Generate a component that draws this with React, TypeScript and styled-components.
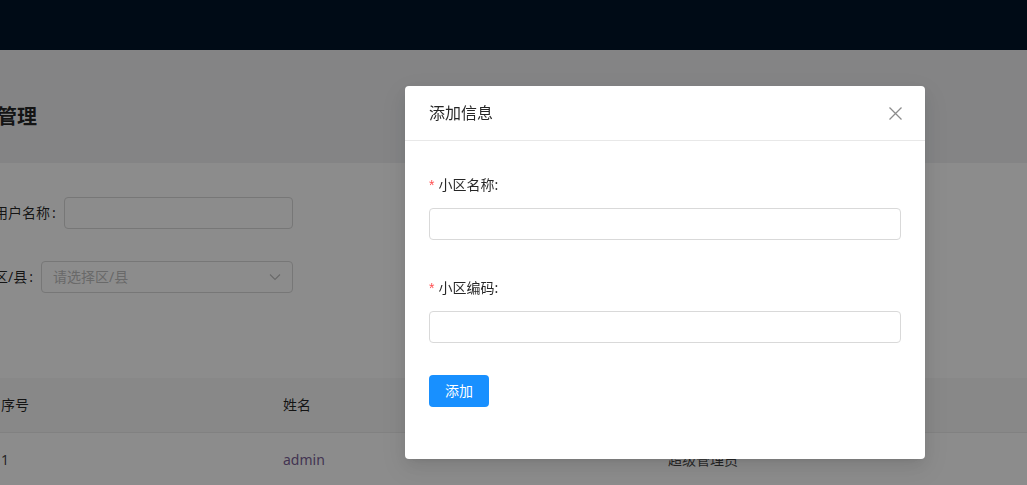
import React from "react";
import styled, { createGlobalStyle } from "styled-components";

const GlobalStyle = createGlobalStyle`
    html, body {
        margin: 0;
        padding: 0;
        width: 1027px;
        height: 485px;
        overflow: hidden;
        font-family: "Noto Sans", "Noto Sans CJK SC", sans-serif;
        font-size: 14px;
        color: rgba(0, 0, 0, 0.85);
    }
`

const Page = styled.div`
    width: 1027px;
    height: 485px;
    overflow: hidden;
    background: #ffffff;
`
const TopBar = styled.div`
    height: 50px;
    background: #001529;
`
const Main = styled.div`
    margin-left: -6px;
`
const PageHead = styled.div`
    height: 113px;
    box-sizing: border-box;
    background: #f0f1f3;
    display: flex;
    align-items: center;
    padding: 20px 0 0 3px;
`
const Title = styled.h2`
    margin: 0;
    font-size: 20px;
    font-weight: 700;
    line-height: 28px;
`
const Filters = styled.div`
    padding-top: 34px;
    display: flex;
    flex-direction: column;
    gap: 32px;
    width: 299px;
`
const FormRow = styled.div`
    display: flex;
    align-items: center;
    height: 32px;
`
const FieldLabel = styled.label`
    flex: none;
    line-height: 22px;
    white-space: nowrap;
`
const Colon = styled.span`
    margin: 0 8px 0 2px;
`
const TextBox = styled.div`
    flex: 1;
    height: 32px;
    box-sizing: border-box;
    border: 1px solid #d9d9d9;
    border-radius: 4px;
    background: #fff;
    display: flex;
    align-items: center;
    padding: 0 11px;
    color: #bfbfbf;
    line-height: 22px;
`
const Placeholder = styled.span`
    flex: 1;
`
const Table = styled.div`
    margin-top: 85px;
    margin-left: -9px;
`
const TableRow = styled.div<{ head?: boolean }>`
    display: grid;
    grid-template-columns: 282px 385px 1fr;
    height: 54px;
    align-items: center;
    background: ${p => (p.head ? "#f8f8f8" : "#fff")};
    border-bottom: 1px solid #ececec;
`
const Cell = styled.div<{ head?: boolean }>`
    padding: 0 16px;
    line-height: 22px;
    color: ${p => (p.head ? "rgba(0,0,0,0.85)" : "rgba(0,0,0,0.75)")};
    font-weight: 400;
`
const Link = styled.span`
    color: #7a5f96;
`

const Mask = styled.div`
    position: fixed;
    inset: 0;
    background: rgba(0, 0, 0, 0.45);
`
const Modal = styled.div`
    position: fixed;
    top: 86px;
    left: 405px;
    width: 520px;
    background: #fff;
    border-radius: 4px;
    box-shadow: 0 3px 6px -4px rgba(0,0,0,0.12), 0 6px 16px 0 rgba(0,0,0,0.08), 0 9px 28px 8px rgba(0,0,0,0.05);
`
const ModalHead = styled.div`
    height: 55px;
    box-sizing: border-box;
    border-bottom: 1px solid #e8e8e8;
    display: flex;
    align-items: center;
    justify-content: space-between;
    padding: 0 22px 0 24px;
`
const ModalTitle = styled.div`
    font-size: 16px;
    line-height: 22px;
    color: rgba(0, 0, 0, 0.85);
`
const CloseButton = styled.button`
    border: 0;
    background: none;
    padding: 0;
    width: 16px;
    height: 16px;
    display: flex;
    align-items: center;
    justify-content: center;
    color: rgba(0, 0, 0, 0.45);
    cursor: pointer;
`
const ModalBody = styled.div`
    padding: 33px 24px 52px;
    display: flex;
    flex-direction: column;
`
const Item = styled.div`
    display: flex;
    flex-direction: column;
    gap: 12px;
    margin-bottom: 37px;
`
const ItemLabel = styled.div`
    line-height: 22px;
    display: flex;
    align-items: center;
`
const Required = styled.span`
    color: #ff4d4f;
    font-family: SimSun, "Liberation Sans", sans-serif;
    margin-right: 4px;
    font-size: 14px;
`
const Input = styled.input`
    height: 32px;
    box-sizing: border-box;
    border: 1px solid #d9d9d9;
    border-radius: 4px;
    padding: 4px 11px;
    font: inherit;
    outline: none;
`
const Primary = styled.button`
    margin-top: -5px;
    align-self: flex-start;
    width: 60px;
    height: 32px;
    border: 0;
    border-radius: 4px;
    background: #1890ff;
    color: #fff;
    font: inherit;
    font-size: 14px;
    line-height: 22px;
    cursor: pointer;
`

const fields = ["小区名称", "小区编码"];

const App = () => {
    return (
        <>
            <GlobalStyle />
            <Page>
                <TopBar />
                <Main>
                    <PageHead>
                        <Title>管理</Title>
                    </PageHead>
                    <Filters>
                        <FormRow>
                            <FieldLabel>用户名称<Colon>:</Colon></FieldLabel>
                            <TextBox />
                        </FormRow>
                        <FormRow>
                            <FieldLabel>区/县<Colon>:</Colon></FieldLabel>
                            <TextBox>
                                <Placeholder>请选择区/县</Placeholder>
                                <svg width="12" height="12" viewBox="0 0 12 12" fill="none">
                                    <path d="M1 3.5 L6 8.5 L11 3.5" stroke="#bfbfbf" strokeWidth="1.1" />
                                </svg>
                            </TextBox>
                        </FormRow>
                    </Filters>
                    <Table>
                        <TableRow head>
                            <Cell head>序号</Cell>
                            <Cell head>姓名</Cell>
                            <Cell head>角色</Cell>
                        </TableRow>
                        <TableRow>
                            <Cell>1</Cell>
                            <Cell><Link>admin</Link></Cell>
                            <Cell>超级管理员</Cell>
                        </TableRow>
                    </Table>
                </Main>
                <Mask />
                <Modal>
                    <ModalHead>
                        <ModalTitle>添加信息</ModalTitle>
                        <CloseButton aria-label="close">
                            <svg width="13" height="13" viewBox="0 0 13 13">
                                <path d="M0.5 0.5 L12.5 12.5 M12.5 0.5 L0.5 12.5" stroke="currentColor" strokeWidth="1.3" />
                            </svg>
                        </CloseButton>
                    </ModalHead>
                    <ModalBody>
                        {fields.map(f => (
                            <Item key={f}>
                                <ItemLabel>
                                    <Required>*</Required>
                                    {f}:
                                </ItemLabel>
                                <Input />
                            </Item>
                        ))}
                        <Primary>添加</Primary>
                    </ModalBody>
                </Modal>
            </Page>
        </>
    );
};

export default App;
